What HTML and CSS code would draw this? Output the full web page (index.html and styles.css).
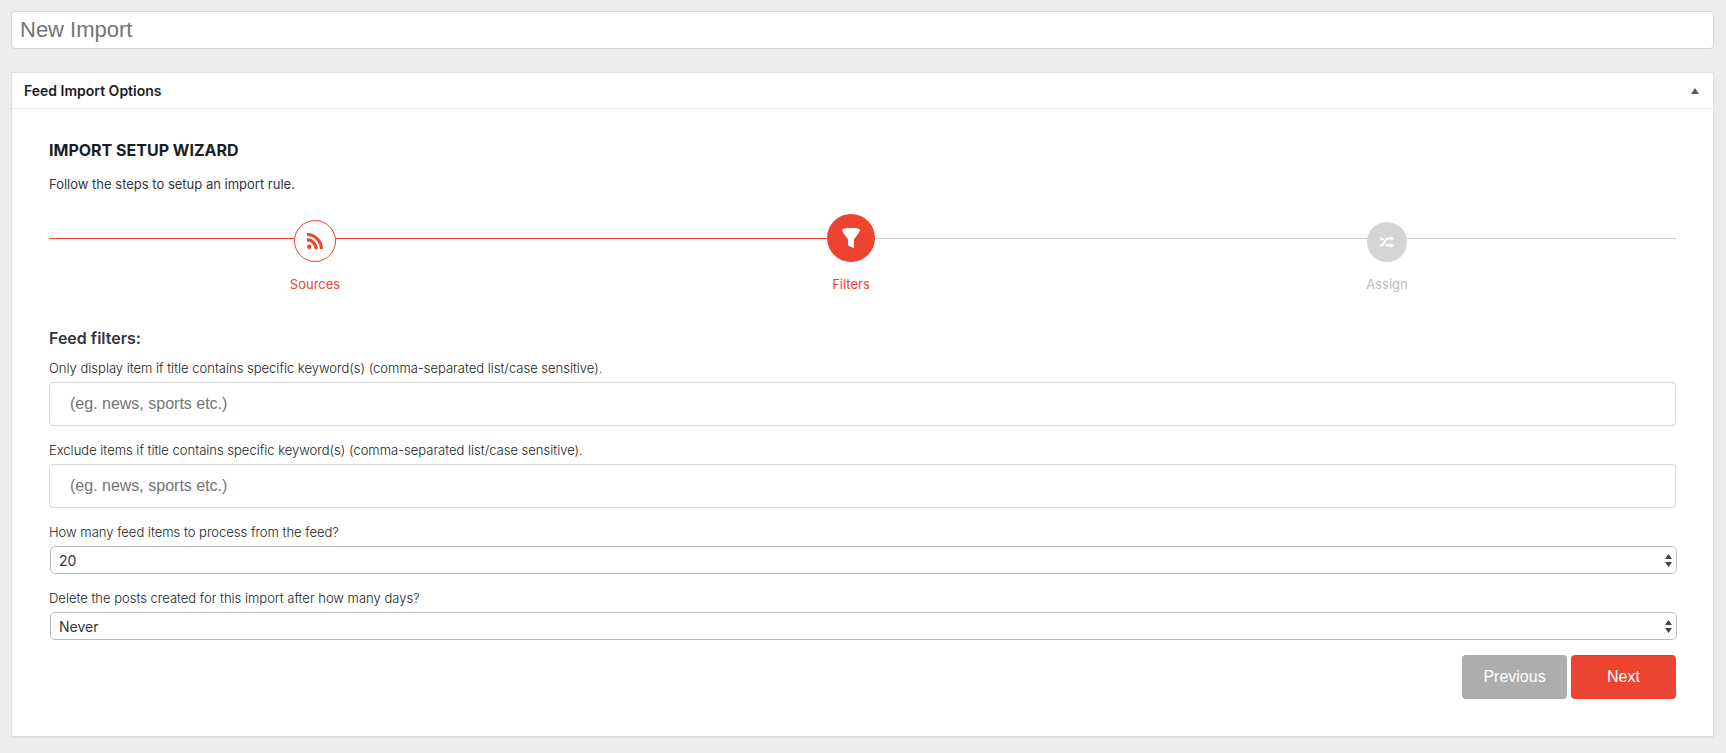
FILE: index.html
```
<!DOCTYPE html>
<html lang="en">

<head>
  <meta charset="utf-8">
  <title>New Import</title>
  <link rel="stylesheet" href="styles.css">
</head>

<body>
  <form class="import-form" action="#" method="post">
    <input type="text" class="post-title" name="post_title" placeholder="New Import" aria-label="New Import">

    <div class="postbox">
      <div class="postbox-header">
        <h2>Feed Import Options</h2>
        <button type="button" class="toggle" aria-label="Toggle panel">
          <svg width="8" height="6" viewBox="0 0 8 6"><path d="M4 0l4 6H0z" fill="#555d66"/></svg>
        </button>
      </div>

      <div class="inside">
        <h3 class="wizard-title">IMPORT SETUP WIZARD</h3>
        <p class="intro">Follow the steps to setup an import rule.</p>

        <div class="progress">
          <ul class="steps">
            <li class="step activated">
              <a href="#sources">
                <span class="step-icon">
                  <svg width="16" height="16" viewBox="0 0 16 16" fill="currentColor">
                    <circle cx="2.200" cy="13.800" r="2.200"/>
                    <path d="M0 5.300v3.100A7.600 7.600 0 0 1 7.600 16h3.100A10.700 10.700 0 0 0 0 5.300z"/>
                    <path d="M0 0v3.100A12.900 12.900 0 0 1 12.900 16H16A16 16 0 0 0 0 0z"/>
                  </svg>
                </span>
                <span class="step-name">Sources</span>
              </a>
            </li>
            <li class="step active">
              <a href="#filters">
                <span class="step-icon">
                  <svg width="18" height="20" viewBox="0 0 18 20" fill="currentColor">
                    <path d="M0 2C0 .6 4 0 9 0s9 .6 9 2c0 .8-.6 1.800-1.200 2.700L12 11.500v8c0 .4-.4.6-.8.400L6.600 17.800c-.4-.2-.6-.5-.6-.9v-5.400L1.200 4.700C.6 3.800 0 2.800 0 2z"/>
                  </svg>
                </span>
                <span class="step-name">Filters</span>
              </a>
            </li>
            <li class="step">
              <a href="#assign">
                <span class="step-icon">
                  <svg width="14" height="12" viewBox="0 0 14 12" fill="none" stroke="currentColor" stroke-width="1.800">
                    <path d="M0 9.500h1.200C4.400 9.500 4.600 2.500 7.800 2.500H11"/>
                    <path d="M0 2.500h1.200q1.300 0 2.200 1.500M5.600 8q.9 1.500 2.200 1.500H11"/>
                    <path d="M10.500 0L14 2.500 10.500 5zM10.500 7L14 9.500 10.500 12z" fill="currentColor" stroke="none"/>
                  </svg>
                </span>
                <span class="step-name">Assign</span>
              </a>
            </li>
          </ul>
        </div>

        <h4 class="section-title">Feed filters:</h4>

        <div class="form-group">
          <label for="inc_key">Only display item if title contains specific keyword(s) (comma-separated list/case sensitive).</label>
          <input type="text" id="inc_key" name="inc_key" class="form-control" placeholder="(eg. news, sports etc.)">
        </div>
        <div class="form-group">
          <label for="exc_key">Exclude items if title contains specific keyword(s) (comma-separated list/case sensitive).</label>
          <input type="text" id="exc_key" name="exc_key" class="form-control" placeholder="(eg. news, sports etc.)">
        </div>
        <div class="form-group">
          <label for="feed_limit">How many feed items to process from the feed?</label>
          <select id="feed_limit" name="feed_limit" class="form-select">
            <option>10</option>
            <option selected>20</option>
            <option>30</option>
          </select>
        </div>
        <div class="form-group">
          <label for="delete_days">Delete the posts created for this import after how many days?</label>
          <select id="delete_days" name="delete_days" class="form-select">
            <option>Never</option>
            <option>1</option>
            <option>2</option>
          </select>
        </div>

        <div class="buttons">
          <button type="button" class="btn btn-previous">Previous</button>
          <button type="button" class="btn btn-next">Next</button>
        </div>
      </div>
    </div>
  </form>
</body>

</html>
```
FILE: styles.css
```
* {
  box-sizing: border-box;
}

body {
  margin: 0;
  background: #ececec;
  color: #32373c;
  font-family: Inter, "Liberation Sans", sans-serif;
  font-size: 13px;
  line-height: 20px;
}

h2,
h3,
h4,
p,
ul {
  margin: 0;
  padding: 0;
}

.import-form {
  padding: 11px 12px 16px 11px;
}

.post-title {
  display: block;
  width: 100%;
  height: 38px;
  padding: 0 8px;
  border: 1px solid #d5d7d7;
  border-radius: 4px;
  background: #fff;
  font-family: "Liberation Sans", sans-serif;
  font-size: 22px;
}

.postbox {
  margin-top: 23px;
  border: 1px solid #dfdfdf;
  background: #fff;
  box-shadow: 0 1px 1px rgba(0, 0, 0, 0.04);
}

.postbox-header {
  display: flex;
  align-items: center;
  justify-content: space-between;
  height: 36px;
  padding: 0 14px 0 12px;
  border-bottom: 1px solid #e8e8e8;
}

.postbox-header h2 {
  color: #191e23;
  font-size: 14px;
  font-weight: 600;
}

.toggle {
  display: flex;
  padding: 0;
  border: none;
  background: none;
  cursor: pointer;
}

.inside {
  padding: 31px 37px 37px;
}

.wizard-title {
  color: #191e23;
  font-size: 16px;
  font-weight: 700;
}

.intro {
  margin-top: 14px;
}

/* steps */
.progress {
  position: relative;
  margin-top: 20px;
}

/* line behind the circles, coloured up to the current step */
.progress::before {
  content: "";
  position: absolute;
  top: 24px;
  left: 0;
  width: 100%;
  height: 1px;
  background: linear-gradient(to right, #ed4431 50%, #ccc 50%);
}

.steps {
  position: relative;
  display: grid;
  grid-template-columns: repeat(3, 1fr);
  margin: 0 21px 0 -2px;
  list-style: none;
}

.step a {
  display: flex;
  flex-direction: column;
  align-items: center;
  color: #bbb;
  text-decoration: none;
}

.step-icon {
  display: flex;
  align-items: center;
  justify-content: center;
  width: 40px;
  height: 40px;
  margin-top: 8px;
  border-radius: 50%;
  background: #d5d5d5;
  color: #fff;
}

.step-name {
  margin-top: 12px;
}

.step.activated a,
.step.active a {
  color: #ed4431;
}

.activated .step-icon {
  width: 42px;
  height: 42px;
  margin-top: 6px;
  border: 1px solid #ed4431;
  background: #fff;
  color: #ed4431;
}

.active .step-icon {
  width: 48px;
  height: 48px;
  margin-top: 0;
  background: #ed4431;
  color: #fff;
}

/* fields */
.section-title {
  margin-top: 34px;
  font-size: 16px;
  font-weight: 600;
}

.form-group {
  margin-top: 14px;
}

.section-title + .form-group {
  margin-top: 10px;
}

label {
  display: block;
  margin-bottom: 4px;
  color: #191e23;
  font-weight: 300;
}

.form-control {
  display: block;
  width: 100%;
  height: 44px;
  padding: 0 20px;
  border: 1px solid #d5d5d5;
  border-radius: 4px;
  font-family: "Liberation Sans", sans-serif;
  font-size: 16px;
}

.form-control::placeholder,
.post-title::placeholder {
  color: #757575;
}

.form-select {
  display: block;
  width: 100%;
  height: 28px;
  margin-left: 1px;
  padding: 0 8px;
  border: 1px solid #bdbdbd;
  border-radius: 5px;
  appearance: none;
  background: #fff url("data:image/svg+xml,%3Csvg xmlns='http://www.w3.org/2000/svg' width='7' height='13'%3E%3Cpath d='M3.500 0L7 5H0zM3.500 13L7 8H0z' fill='%23444'/%3E%3C/svg%3E") right 4px center no-repeat;
  color: #32373c;
  font-family: inherit;
  font-size: 14px;
}

.buttons {
  display: flex;
  justify-content: flex-end;
  gap: 4px;
  margin-top: 15px;
}

.btn {
  width: 105px;
  height: 44px;
  border: none;
  border-radius: 4px;
  color: #fff;
  font-family: "Liberation Sans", sans-serif;
  font-size: 16px;
  cursor: pointer;
}

.btn-previous {
  background: #adadad;
}

.btn-next {
  background: #ed4431;
}
```
